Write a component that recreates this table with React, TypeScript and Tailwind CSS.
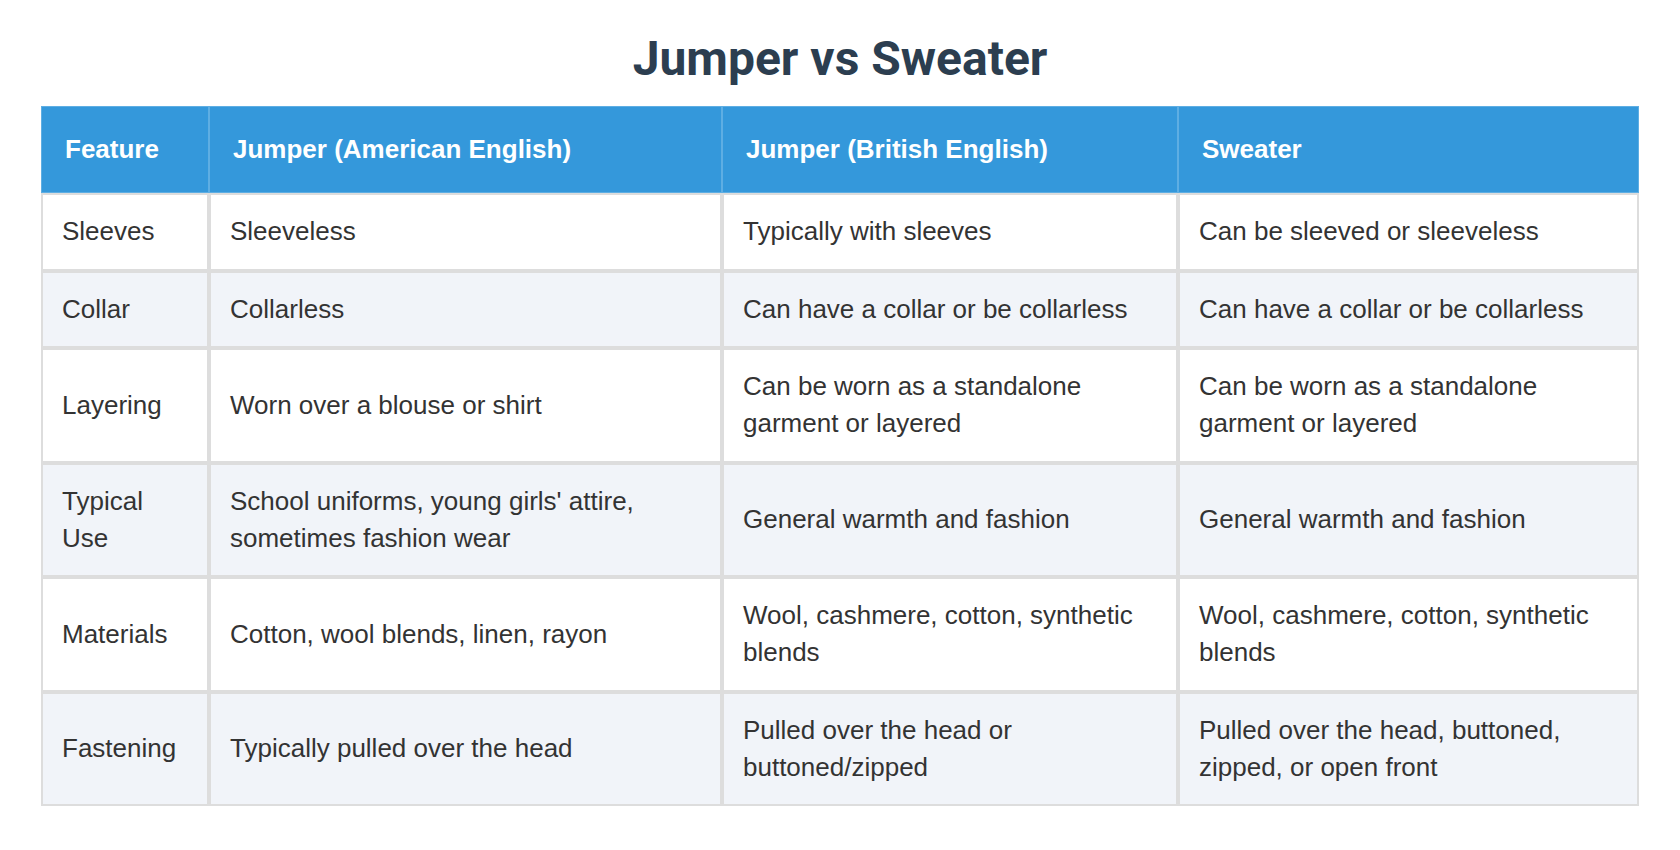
const headers = [
  'Feature',
  'Jumper (American English)',
  'Jumper (British English)',
  'Sweater',
];

const rows: string[][] = [
  ['Sleeves', 'Sleeveless', 'Typically with sleeves', 'Can be sleeved or sleeveless'],
  ['Collar', 'Collarless', 'Can have a collar or be collarless', 'Can have a collar or be collarless'],
  [
    'Layering',
    'Worn over a blouse or shirt',
    'Can be worn as a standalone garment or layered',
    'Can be worn as a standalone garment or layered',
  ],
  [
    'Typical Use',
    "School uniforms, young girls' attire, sometimes fashion wear",
    'General warmth and fashion',
    'General warmth and fashion',
  ],
  [
    'Materials',
    'Cotton, wool blends, linen, rayon',
    'Wool, cashmere, cotton, synthetic blends',
    'Wool, cashmere, cotton, synthetic blends',
  ],
  [
    'Fastening',
    'Typically pulled over the head',
    'Pulled over the head or buttoned/zipped',
    'Pulled over the head, buttoned, zipped, or open front',
  ],
];

export default function App() {
  return (
    <div className="min-h-screen bg-white px-[41px] pt-[31px] font-['Liberation_Sans',Arial,sans-serif] text-[#333333]">
      <h1 className="mb-[19px] text-center font-['Roboto',sans-serif] text-[48px] font-bold leading-[56px] text-[#2c3e50]">
        Jumper vs Sweater
      </h1>

      <table className="w-full table-fixed border-separate border-spacing-0 text-[26px] leading-[37px]">
        <colgroup>
          <col className="w-[168px]" />
          <col className="w-[513px]" />
          <col className="w-[456px]" />
          <col />
        </colgroup>
        <thead>
          <tr className="bg-[#3498db]">
            {headers.map((h) => (
              <th
                key={h}
                className="border border-[#5eaee3] px-[23px] py-[24px] text-left font-bold text-white"
              >
                {h}
              </th>
            ))}
          </tr>
        </thead>
        <tbody>
          {rows.map((row, i) => (
            <tr key={row[0]} className={i % 2 === 1 ? 'bg-[#f1f4f9]' : 'bg-white'}>
              {row.map((cell, j) => (
                <td
                  key={j}
                  className="border-2 border-[#dddddd] px-[19px] py-[18.25px] align-middle"
                >
                  {cell}
                </td>
              ))}
            </tr>
          ))}
        </tbody>
      </table>
    </div>
  );
}
